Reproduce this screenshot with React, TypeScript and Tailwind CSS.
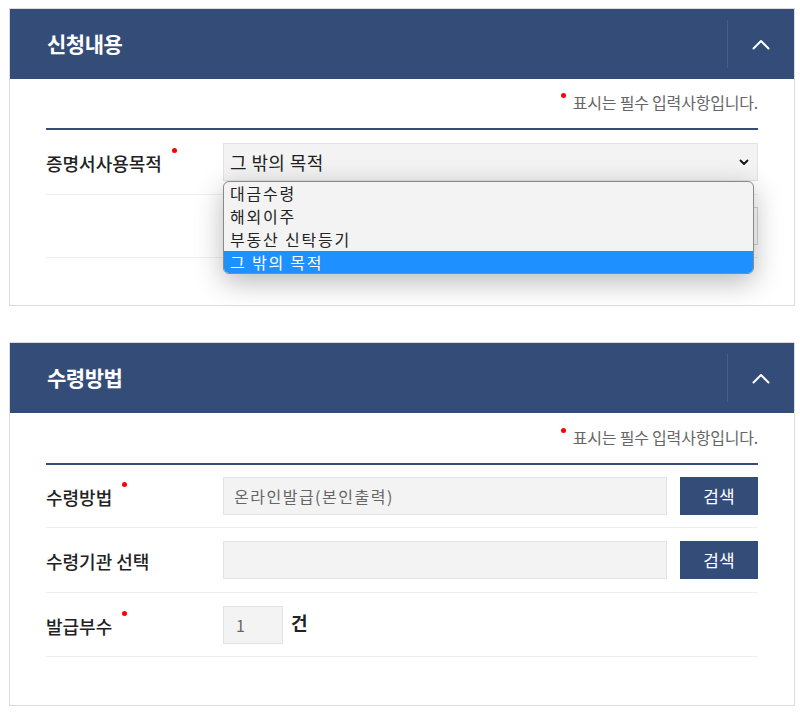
import React from "react";

const F = { fontFamily: '"Noto Sans CJK KR", "Noto Sans", sans-serif' };

function Dot() {
  return <span className="absolute -right-[15px] -top-[2px] w-[5px] h-[5px] rounded-full bg-[#f00]" />;
}

function Header({ title }: { title: string }) {
  return (
    <div className="flex items-center h-[70px] bg-[#344d78] pl-[37px]">
      <h2 className="flex-1 text-white text-[21px] font-bold tracking-[-0.5px]">{title}</h2>
      <div className="h-[48px] w-px bg-[#46608a]" />
      <div className="w-[66px] flex items-center justify-center">
        <svg width="18" height="11" viewBox="0 0 18 11" fill="none">
          <path d="M1.5 9.5 L9 2 L16.5 9.5" stroke="white" strokeWidth="2" strokeLinecap="round" strokeLinejoin="round" />
        </svg>
      </div>
    </div>
  );
}

function Note({ extra }: { extra?: boolean }) {
  return (
    <div className={extra ? "flex justify-end pt-[12px] pb-[14px]" : "flex justify-end pt-[11px] pb-[14px]"}>
      <span className="relative text-[16px] leading-[24px] text-[#666] tracking-[-0.2px] pl-[12px]">
        <span className="absolute left-0 top-[3px] w-[5px] h-[5px] rounded-full bg-[#f00]" />
        표시는 필수 입력사항입니다.
      </span>
    </div>
  );
}

function Label({ text, req }: { text: string; req?: boolean }) {
  return (
    <div className="w-[177px] shrink-0 pt-[3px]">
      <span className="relative text-[18px] font-medium text-[#222]">
        {text}
        {req && <Dot />}
      </span>
    </div>
  );
}

function SearchBtn() {
  return (
    <button className="w-[78px] h-[38px] shrink-0 bg-[#344d78] text-white text-[17px] ml-[13px]">검색</button>
  );
}

export default function App() {
  return (
    <div style={F} className="bg-white w-[800px] h-[712px] pt-[8px] px-[9px]">
      <div className="border border-[#dcdcdc] w-[786px]">
        <Header title="신청내용" />
        <div className="px-[36px] pb-[47px]">
          <Note />
          <div className="border-t-2 border-[#344d78]">
            <div className="relative flex items-center h-[65px] border-b border-[#eee]">
              <Label text="증명서사용목적" req />
              <div className="flex-1 h-[38px] bg-[#f3f3f3] border border-[#e3e3e3] flex items-center pl-[6px] pr-[8px]">
                <span className="flex-1 text-[18px] tracking-[0.4px] text-[#222]">그 밖의 목적</span>
                <svg width="10" height="7" viewBox="0 0 10 7" fill="none">
                  <path d="M1.5 1.5 L5 5 L8.5 1.5" stroke="#111" strokeWidth="1.8" strokeLinecap="round" strokeLinejoin="round" />
                </svg>
              </div>
              <div className="absolute left-[177px] top-[51px] w-[531px] z-10 rounded-[6px] border border-[#8a8a8a] bg-[#f3f3f3] overflow-hidden shadow-[0_8px_28px_rgba(0,0,0,0.28)]">
                {["대금수령", "해외이주", "부동산 신탁등기"].map((o) => (
                  <div key={o} className="h-[23px] leading-[23px] pl-[6px] text-[16px] tracking-[1.8px] text-[#222]">{o}</div>
                ))}
                <div className="h-[22px] leading-[22px] pl-[6px] text-[16px] tracking-[1.8px] text-white bg-[#1e90ff]">그 밖의 목적</div>
              </div>
            </div>
            <div className="flex items-center h-[63px] border-b border-[#eee]">
              <div className="w-[177px] shrink-0" />
              <div className="flex-1 h-[38px] bg-white border border-[#d5d5d5]" />
            </div>
          </div>
        </div>
      </div>

      <div className="border border-[#dcdcdc] w-[786px] mt-[36px]">
        <Header title="수령방법" />
        <div className="px-[36px] pb-[48px]">
          <Note extra />
          <div className="border-t-2 border-[#344d78]">
            <div className="flex items-center h-[63px] border-b border-[#eee]">
              <Label text="수령방법" req />
              <div className="flex-1 h-[38px] bg-[#f3f3f3] border border-[#e3e3e3] flex items-center pl-[10px]">
                <span className="text-[16px] text-[#666] tracking-[1.5px]">온라인발급(본인출력)</span>
              </div>
              <SearchBtn />
            </div>
            <div className="flex items-center h-[65px] border-b border-[#eee]">
              <Label text="수령기관 선택" />
              <div className="flex-1 h-[38px] bg-[#f3f3f3] border border-[#e3e3e3]" />
              <SearchBtn />
            </div>
            <div className="flex items-center h-[64px] border-b border-[#eee]">
              <Label text="발급부수" req />
              <div className="w-[60px] h-[38px] bg-[#f3f3f3] border border-[#e3e3e3] flex items-center pl-[12px]">
                <span className="text-[16px] text-[#666]">1</span>
              </div>
              <span className="ml-[8px] -mt-[5px] text-[18px] font-bold text-[#222]">건</span>
            </div>
          </div>
        </div>
      </div>
    </div>
  );
}
